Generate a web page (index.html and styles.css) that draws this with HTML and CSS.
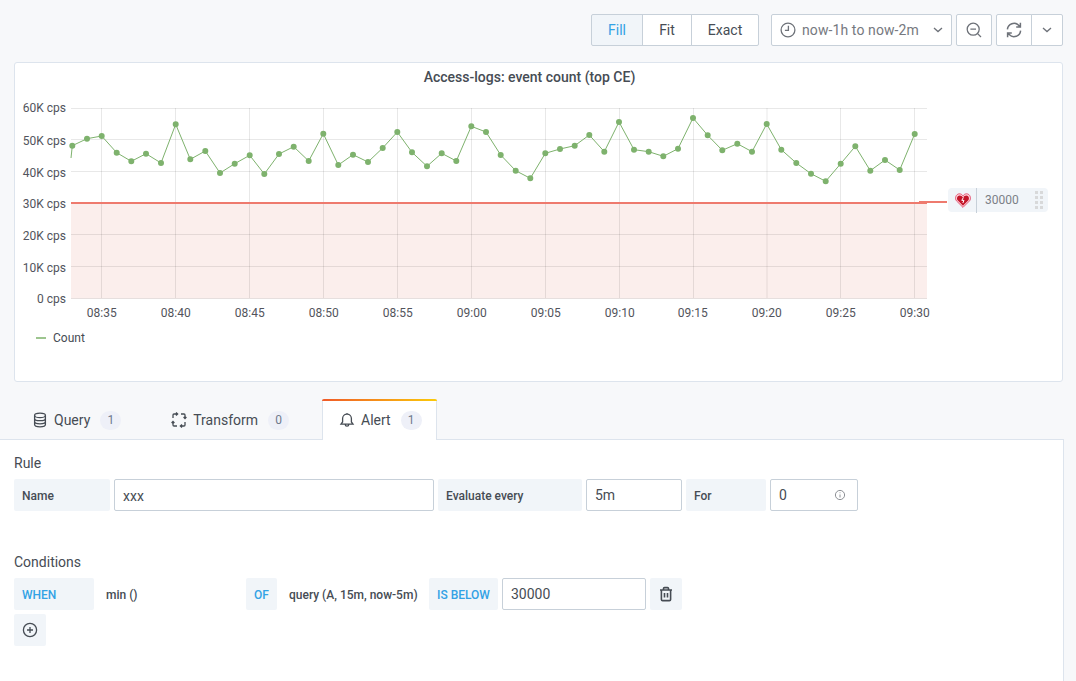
FILE: index.html
```html
<!DOCTYPE html>
<html lang="en">
<head>
<meta charset="utf-8">
<title>Alert</title>
<link rel="stylesheet" href="styles.css">
</head>
<body>
<header class="toolbar">
  <div class="btn-group">
    <button class="btn btn-active w-fill">Fill</button>
    <button class="btn w-fit">Fit</button>
    <button class="btn w-exact">Exact</button>
  </div>
  <button class="btn btn-muted time-picker">
    <svg class="icon" viewBox="0 0 16 16"><circle cx="8" cy="8" r="6.9"/><path d="M8.400 3.800V8.400H4.900"/></svg>
    <span class="time-label">now-1h to now-2m</span>
    <svg class="caret" viewBox="0 0 10 6"><path d="M1 1l4 3.600L9 1"/></svg>
  </button>
  <button class="btn btn-muted btn-icon zoom-btn">
    <svg class="icon" viewBox="0 0 16 16"><circle cx="7.200" cy="7.200" r="6"/><path d="M4.400 7.200h5.600M11.600 11.600l3.400 3.400"/></svg>
  </button>
  <div class="btn-group refresh-group">
    <button class="btn btn-muted btn-icon refresh-btn">
      <svg class="icon icon-sync" viewBox="0 0 16 16"><path d="M1.400 7.400A6.600 6.600 0 0 1 12.800 3.400L14.400 5M14.400 .8v4.200h-4.200M14.600 8.600A6.600 6.600 0 0 1 3.200 12.600L1.600 11M1.600 15.200V11h4.200"/></svg>
    </button>
    <button class="btn btn-muted btn-icon caret-btn">
      <svg class="caret" viewBox="0 0 10 6"><path d="M1 1l4 3.600L9 1"/></svg>
    </button>
  </div>
</header>

<section class="panel">
  <h2 class="panel-title">Access-logs: event count (top CE)</h2>
  <svg class="chart" viewBox="15 93 1047 235" width="1047" height="235">
    <rect class="alert-zone" x="71" y="203" width="856" height="95.500"/>
    <path class="grid" d="M71 108.500H927M71 139.500H927M71 171.500H927M71 234.500H927M71 266.500H927M71 298.500H927"/>
    <path class="grid" d="M101.500 108V298M175.500 108V298M249.500 108V298M323.500 108V298M397.500 108V298M471.500 108V298M545.500 108V298M619.500 108V298M693.500 108V298M767 108V298M840.500 108V298M914.500 108V298"/>
    <path class="threshold" d="M71 203H927"/>
    <path class="threshold-link" d="M919 202H947"/>
    <polyline class="series" points="71,158 72.3,145.7 87,138.7 101.7,136 116.7,152.7 131.3,161.3 146,153.7 161,163 175.7,124.3 190.3,159.3 205.3,151 220,173 234.7,163.7 249.7,155.3 264.3,174 279,154 293.7,146.7 308.7,161 323.3,133.7 338.3,165 353,154.7 368,162 382.7,148 397.3,132 412,152.3 427,166.3 441.7,153.3 456.3,161 471.3,126.3 486,132 500.7,155 515.7,170.7 530.3,178.3 545.3,153.3 560,149 574.7,145.7 589.3,135 604.3,151.7 619,122 634,149.7 648.7,151.7 663.3,156.3 678,148.7 693,118 707.7,135.3 722.3,150.3 737.3,143.7 752,151.7 766.7,124 781.3,149.7 796.3,163 811,173.7 825.7,181.3 840.7,163.7 855.3,146.3 870.3,170.7 885,160 899.7,170 914.7,134"/>
    <path class="dots" d="M72.3 145.7h0M87 138.7h0M101.7 136h0M116.7 152.7h0M131.3 161.3h0M146 153.7h0M161 163h0M175.7 124.3h0M190.3 159.3h0M205.3 151h0M220 173h0M234.7 163.7h0M249.7 155.3h0M264.3 174h0M279 154h0M293.7 146.7h0M308.7 161h0M323.3 133.7h0M338.3 165h0M353 154.7h0M368 162h0M382.7 148h0M397.3 132h0M412 152.3h0M427 166.3h0M441.7 153.3h0M456.3 161h0M471.3 126.3h0M486 132h0M500.7 155h0M515.7 170.7h0M530.3 178.3h0M545.3 153.3h0M560 149h0M574.7 145.7h0M589.3 135h0M604.3 151.7h0M619 122h0M634 149.7h0M648.7 151.7h0M663.3 156.3h0M678 148.7h0M693 118h0M707.7 135.3h0M722.3 150.3h0M737.3 143.7h0M752 151.7h0M766.7 124h0M781.3 149.7h0M796.3 163h0M811 173.7h0M825.7 181.3h0M840.7 163.7h0M855.3 146.3h0M870.3 170.7h0M885 160h0M899.7 170h0M914.7 134h0"/>
    <g class="y-labels">
      <text x="66" y="112">60K cps</text>
      <text x="66" y="145">50K cps</text>
      <text x="66" y="177">40K cps</text>
      <text x="66" y="208">30K cps</text>
      <text x="66" y="240">20K cps</text>
      <text x="66" y="272">10K cps</text>
      <text x="66" y="303">0 cps</text>
    </g>
    <g class="x-labels">
      <text x="101.7" y="317">08:35</text>
      <text x="175.700" y="317">08:40</text>
      <text x="249.700" y="317">08:45</text>
      <text x="323.700" y="317">08:50</text>
      <text x="397.700" y="317">08:55</text>
      <text x="471.700" y="317">09:00</text>
      <text x="545.700" y="317">09:05</text>
      <text x="619.700" y="317">09:10</text>
      <text x="692.700" y="317">09:15</text>
      <text x="766.700" y="317">09:20</text>
      <text x="840.700" y="317">09:25</text>
      <text x="914.700" y="317">09:30</text>
    </g>
  </svg>
  <div class="legend"><span class="legend-line"></span><span>Count</span></div>
  <div class="threshold-handle">
    <svg class="heart" viewBox="0 0 16 15">
      <path class="heart-outer" d="M8 14.400L1.400 7.800C-.6 5.400 1 .8 4.400 .8 5.800 .8 7.200 1.600 8 2.800 8.800 1.600 10.200 .8 11.600 .8 15 .8 16.600 5.400 14.600 7.800Z"/>
      <path class="heart-inner" d="M8 12.800L2.600 7.200C1.200 5.400 2.400 2.400 4.600 2.400 6 2.400 7.200 3.200 8 4.600 8.800 3.200 10 2.400 11.400 2.400 13.600 2.400 14.800 5.400 13.400 7.200Z"/>
      <path class="heart-crack" d="M8.400 4.400L6.800 7.400H9L7.800 10"/>
    </svg>
    <span class="handle-value">30000</span>
    <span class="grip"><i></i><i></i><i></i><i></i><i></i><i></i><i></i><i></i></span>
  </div>
</section>

<nav class="tabs">
  <div class="tab">
    <svg class="icon icon-dark" viewBox="0 0 16 16"><ellipse cx="8" cy="3.400" rx="5.400" ry="2.200"/><path d="M2.600 3.400v9.200c0 1.200 2.400 2.200 5.400 2.200s5.400-1 5.400-2.200V3.400M2.600 6.500c0 1.200 2.400 2.200 5.400 2.200s5.400-1 5.400-2.200M2.600 9.600c0 1.200 2.400 2.200 5.400 2.200s5.400-1 5.400-2.200"/></svg>
    <span>Query</span><span class="count">1</span>
  </div>
  <div class="tab">
    <svg class="icon icon-dark" viewBox="0 0 16 16"><path d="M2 6V3a1 1 0 0 1 1-1h3M5 .6L6.600 2 5 3.400M10 2h3a1 1 0 0 1 1 1v3M15.400 5L14 6.600 12.600 5M14 10v3a1 1 0 0 1-1 1h-3M11 15.400L9.400 14 11 12.600M6 14H3a1 1 0 0 1-1-1v-3M.6 11L2 9.400 3.400 11"/></svg>
    <span>Transform</span><span class="count">0</span>
  </div>
  <div class="tab tab-active">
    <svg class="icon icon-dark" viewBox="0 0 16 16"><path d="M2 12.200h12l-1.600-2.200V6.600a4.400 4.400 0 0 0-8.800 0V10ZM6.200 12.400a1.800 1.800 0 0 0 3.600 0M8 2.200V1"/></svg>
    <span>Alert</span><span class="count">1</span>
  </div>
</nav>

<main class="editor">
  <h3 class="section-title">Rule</h3>
  <div class="form-row">
    <label class="label w-name">Name</label>
    <div class="input w-rule input-low">xxx</div>
    <label class="label w-eval">Evaluate every</label>
    <div class="input w-five">5m</div>
    <label class="label w-for">For</label>
    <div class="input w-zero"><span>0</span>
      <svg class="info" viewBox="0 0 12 12"><circle cx="6" cy="6" r="4.600"/><path d="M6 5.500v3M6 3.400v.8"/></svg>
    </div>
  </div>
  <h3 class="section-title conditions">Conditions</h3>
  <div class="form-row">
    <span class="label keyword w-when">WHEN</span>
    <span class="plain w-min">min ()</span>
    <span class="label keyword w-of">OF</span>
    <span class="plain w-query">query (A, 15m, now-5m)</span>
    <span class="label keyword w-below">IS BELOW</span>
    <div class="input w-value">30000</div>
    <button class="square">
      <svg class="icon icon-dark icon-bold" viewBox="0 0 16 16"><path d="M2 4h12M5.500 4V2.600a1 1 0 0 1 1-1h3a1 1 0 0 1 1 1V4M3.400 4v9.400a1.200 1.200 0 0 0 1.200 1.200h6.800a1.200 1.200 0 0 0 1.200-1.200V4M6.500 7v4.600M9.500 7v4.600"/></svg>
    </button>
  </div>
  <button class="square add">
    <svg class="icon icon-dark" viewBox="0 0 16 16"><circle cx="8" cy="8" r="6.600"/><path d="M8 5v6M5 8h6"/></svg>
  </button>
</main>
</body>
</html>
```
FILE: styles.css
```css
* { box-sizing: border-box; }
html, body { height: 100%; }
body {
  margin: 0;
  background: #f7f8fa;
  color: #464c54;
  font-family: Roboto, "Liberation Sans", sans-serif;
  font-size: 14px;
  overflow: hidden;
}
button { font: inherit; margin: 0; }

.toolbar {
  display: flex;
  justify-content: flex-end;
  align-items: center;
  gap: 4px;
  height: 62px;
  padding: 14px 13px 16px 0;
}
.btn-group { display: flex; margin-right: 8px; }
.refresh-group { margin-right: 0; }
.btn {
  height: 32px;
  border: 1px solid #c7d0d9;
  border-radius: 2px;
  background: #fff;
  color: #464c54;
  padding: 0;
  display: flex;
  align-items: center;
  justify-content: center;
}
.btn-group .btn { margin-left: -1px; border-radius: 0; }
.btn-group .btn:first-child { margin-left: 0; border-radius: 2px 0 0 2px; }
.btn-group .btn:last-child { border-radius: 0 2px 2px 0; }
.btn-active { background: #f1f5f9; color: #33a2e5; }
.btn-muted { color: #767980; }
.w-fill { width: 52px; }
.w-fit { width: 50px; }
.w-exact { width: 68px; }
.time-picker { width: 181px; padding: 0 8px 0 8px; justify-content: flex-start; }
.time-label { margin-left: 6px; flex: 1; text-align: left; letter-spacing: .1px; }
.zoom-btn { width: 36px; }
.refresh-btn { width: 36px; }
.caret-btn { width: 32px; }

.icon { width: 16px; height: 16px; fill: none; stroke: #6e7279; stroke-width: 1.3; flex: none; }
.icon-sync { stroke-width: 1.5; }
.icon-dark { stroke: #464c54; }
.icon-bold { stroke-width: 1.6; }
.caret { width: 10px; height: 6px; fill: none; stroke: #6e7279; stroke-width: 1.3; }

.panel {
  position: relative;
  height: 320px;
  margin: 0 13px 17px 14px;
  background: #fff;
  border: 1px solid #dde4ed;
  border-radius: 3px;
}
.panel-title {
  height: 30px;
  margin: 0;
  padding: 5px 18px 0 0;
  font-size: 14px;
  font-weight: 500;
  line-height: 18px;
  text-align: center;
}
.chart { display: block; }
.grid { fill: none; stroke: #000; stroke-opacity: .09; stroke-width: 1; }
.alert-zone { fill: #fbeeec; }
.threshold { fill: none; stroke: #ee7a6e; stroke-width: 2; }
.threshold-link { fill: none; stroke: #ee7a6e; stroke-width: 2; }
.series { fill: none; stroke: #7eb26d; stroke-width: 1; }
.dots { fill: none; stroke: #7eb26d; stroke-width: 6; stroke-linecap: round; }
.y-labels text { font-size: 12px; fill: #52545c; text-anchor: end; }
.x-labels text { font-size: 12px; fill: #52545c; text-anchor: middle; }

.legend {
  display: flex;
  align-items: center;
  height: 20px;
  padding-left: 21px;
  font-size: 12px;
}
.legend-line { width: 10px; height: 2px; margin-right: 7px; background: #9dc58f; }

.threshold-handle {
  position: absolute;
  left: 933px;
  top: 125px;
  width: 100px;
  height: 24px;
  display: flex;
  align-items: center;
  background: #f1f5f9;
  border-radius: 4px;
  color: #7b8087;
  font-size: 12px;
}
.heart { width: 16px; height: 15px; margin-left: 7px; flex: none; }
.heart-outer { fill: #fbd3da; stroke: #e0214a; stroke-width: .7; }
.heart-inner { fill: #c4162a; }
.heart-crack { fill: none; stroke: #fff; stroke-width: 1; }
.handle-value {
  height: 25px;
  margin-left: 5px;
  padding-left: 8px;
  line-height: 24px;
  border-left: 1px solid #c7d0d9;
  flex: 1;
}
.grip {
  display: grid;
  grid-template-columns: 3px 3px;
  grid-auto-rows: 3px;
  gap: 2px;
  margin-right: 5px;
}
.grip i { background: #d8d9da; }

.tabs {
  display: flex;
  gap: 18px;
  height: 40px;
  padding: 0 0 0 16px;
}
.tab {
  display: flex;
  align-items: center;
  height: 41px;
  padding: 1px 16px 0;
  font-size: 14px;
  position: relative;
  z-index: 1;
}
.tab > span:first-of-type { margin-left: 6px; }
.tab-active {
  margin-left: -1px;
  background: #fff;
  border: 1px solid #dde4ed;
  border-top: 0;
  border-bottom: 0;
  border-radius: 2px 2px 0 0;
  padding-right: 14px;
}
.tab-active::before {
  content: "";
  position: absolute;
  left: -1px;
  right: -1px;
  top: 0;
  height: 2px;
  border-radius: 2px 2px 0 0;
  background: linear-gradient(90deg, #f05a28, #fbca0a);
}
.count {
  width: 21px;
  height: 19px;
  margin-left: 10px;
  line-height: 19px;
  border-radius: 10px;
  background: #eef0f8;
  color: #707a8c;
  font-size: 12px;
  text-align: center;
}

.editor {
  height: 242px;
  margin-right: 12px;
  padding: 14px 14px 0;
  background: #fff;
  border-top: 1px solid #dde4ed;
  border-right: 1px solid #dde4ed;
}
.section-title {
  margin: 0 0 7px;
  font-size: 14px;
  font-weight: 400;
  line-height: 18px;
}
.conditions { margin-top: 42px; }
.form-row { display: flex; gap: 4px; height: 32px; }
.label {
  display: flex;
  align-items: center;
  height: 32px;
  padding: 2px 8px 0;
  background: #f1f5f9;
  border-radius: 2px;
  font-size: 12px;
  font-weight: 500;
}
.keyword { color: #33a2e5; }
.w-name { width: 96px; }
.w-eval { width: 144px; }
.w-for { width: 80px; }
.w-when { width: 80px; }
.w-of { width: 31px; }
.w-below { width: 69px; white-space: nowrap; }
.input {
  display: flex;
  align-items: center;
  justify-content: space-between;
  height: 32px;
  padding: 0 8px;
  border: 1px solid #c7d0d9;
  border-radius: 2px;
  background: #fff;
  font-size: 14px;
}
.input-low { padding-top: 2px; }
.w-rule { width: 320px; }
.w-five { width: 96px; }
.w-zero { width: 88px; padding-right: 11px; }
.w-value { width: 144px; }
.plain {
  display: flex;
  align-items: center;
  padding: 2px 8px 0;
  font-size: 12px;
  font-weight: 500;
  white-space: nowrap;
}
.w-min { width: 144px; }
.w-query { width: 144px; }
.info { width: 12px; height: 12px; fill: none; stroke: #8e9196; stroke-width: 1; }
.square {
  display: flex;
  align-items: center;
  justify-content: center;
  width: 32px;
  height: 32px;
  padding: 0;
  border: 0;
  border-radius: 2px;
  background: #f1f5f9;
}
.add { margin-top: 4px; }
```
